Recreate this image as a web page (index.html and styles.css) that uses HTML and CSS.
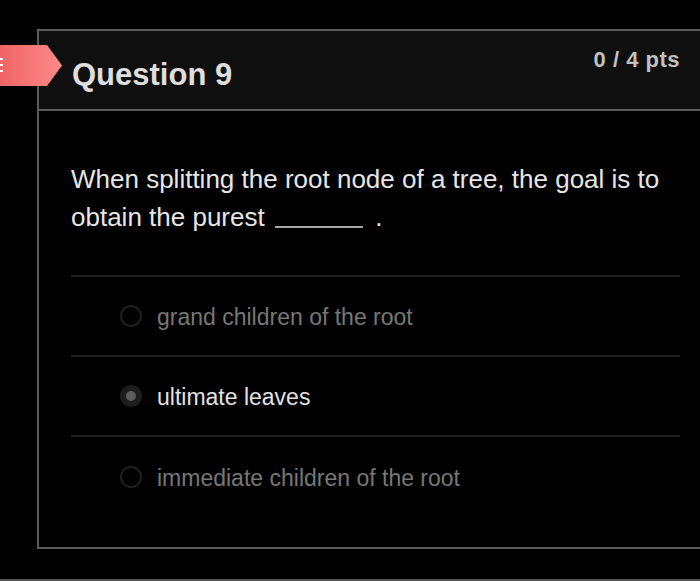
FILE: index.html
```html
<!DOCTYPE html>
<html>
<head>
<meta charset="utf-8">
<link rel="stylesheet" href="styles.css">
</head>
<body>
<div class="page">
  <div class="tag">
    <svg class="tag-icon" width="6" height="16" viewBox="0 0 6 16"><path d="M0 2H4M0 8H4M0 14H4" stroke="#fff" stroke-width="2"/></svg>
  </div>
  <div class="card">
    <div class="header">
      <h2 class="title">Question 9</h2>
      <div class="pts">0 / 4 pts</div>
    </div>
    <div class="body">
      <p class="question">When splitting the root node of a tree, the goal is to obtain the purest <span class="blank"></span> .</p>
      <div class="answers">
        <div class="answer">
          <span class="radio"></span>
          <span class="label">grand children of the root</span>
        </div>
        <div class="answer selected">
          <span class="radio"><span class="dot"></span></span>
          <span class="label">ultimate leaves</span>
        </div>
        <div class="answer">
          <span class="radio"></span>
          <span class="label">immediate children of the root</span>
        </div>
      </div>
    </div>
  </div>
  <div class="bottom-line"></div>
</div>
</body>
</html>
```
FILE: styles.css
```css
html, body {
  margin: 0;
  padding: 0;
  background: #000;
  overflow: hidden;
}
body {
  width: 700px;
  height: 581px;
  font-family: "Liberation Sans", Arial, Helvetica, sans-serif;
}
.page {
  position: relative;
  width: 700px;
  height: 581px;
  padding-top: 29px;
  box-sizing: border-box;
}
.tag {
  position: absolute;
  left: 0;
  top: 45px;
  width: 62px;
  height: 41px;
  background: linear-gradient(to right, #ee6464, #ff8a8a);
  clip-path: polygon(0 0, 47px 0, 62px 50%, 47px 100%, 0 100%);
}
.tag-icon {
  position: absolute;
  left: -1px;
  top: 12px;
}
.card {
  margin-left: 37px;
  width: 663px;
  border: 2px solid #5a5a5a;
  border-right: none;
  box-sizing: border-box;
}
.header {
  height: 80px;
  box-sizing: border-box;
  background: #0f0f0f;
  border-bottom: 2px solid #5a5a5a;
  display: flex;
  justify-content: space-between;
  align-items: flex-start;
  padding: 0 20px 0 33px;
}
.title {
  margin: 26px 0 0;
  font-size: 31px;
  font-weight: bold;
  color: #dedede;
  line-height: 36px;
}
.pts {
  margin-top: 16px;
  font-size: 22px;
  letter-spacing: 0.5px;
  font-weight: bold;
  color: #c0c0c0;
  line-height: 26px;
}
.body {
  padding: 49px 20px 30px 32px;
}
.question {
  margin: 0;
  font-size: 26px;
  line-height: 38px;
  color: #e6e6e6;
  padding-bottom: 39px;
  border-bottom: 2px solid #1e1e1e;
}
.blank {
  display: inline-block;
  width: 88px;
  height: 2px;
  margin: 0 5px 0 3px;
  background: #a8a8a8;
  vertical-align: -2px;
}
.answers {
  display: flex;
  flex-direction: column;
}
.answer {
  height: 80px;
  display: flex;
  align-items: center;
  gap: 15px;
  padding-left: 49px;
  border-bottom: 2px solid #1e1e1e;
  box-sizing: border-box;
}
.answer:last-child {
  border-bottom: none;
}
.radio {
  width: 22px;
  height: 22px;
  border-radius: 50%;
  border: 2px solid #1f1f1f;
  box-sizing: border-box;
  display: flex;
  align-items: center;
  justify-content: center;
}
.selected .radio {
  background: #1d1d1d;
  border-color: #1d1d1d;
}
.dot {
  width: 10px;
  height: 10px;
  border-radius: 50%;
  background: #5c5c5c;
}
.label {
  font-size: 23px;
  color: #777;
  padding-top: 3px;
}
.selected .label {
  color: #e2e2e2;
}
.bottom-line {
  position: absolute;
  left: 0;
  right: 0;
  top: 579px;
  height: 2px;
  background: #555;
}
```
